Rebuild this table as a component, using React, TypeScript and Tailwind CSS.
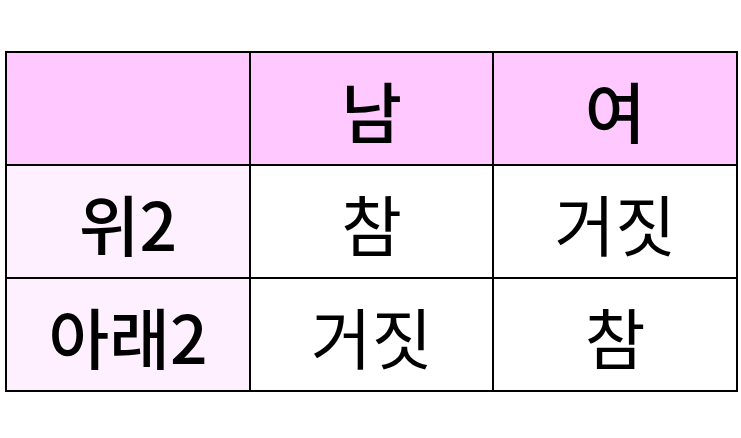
export default function App() {
  const rows = [
    { label: '위2', a: '참', b: '거짓' },
    { label: '아래2', a: '거짓', b: '참' },
  ];
  return (
    <div
      className="w-[741px] h-[438px] bg-white pt-[51px] pl-[5px]"
      style={{ fontFamily: '"Noto Sans CJK KR", "Noto Sans", sans-serif' }}
    >
      <table className="border-collapse border-2 border-black table-fixed w-[731px] text-black">
        <tbody>
          <tr className="h-[113px] bg-[#ffc8ff]">
            <td className="w-[244px] border-2 border-black"></td>
            <td className="w-[243px] border-2 border-black text-center text-[66px] font-medium leading-none">남</td>
            <td className="w-[244px] border-2 border-black text-center text-[66px] font-medium leading-none">여</td>
          </tr>
          {rows.map((r) => (
            <tr key={r.label} className="h-[113px]">
              <td className="border-2 border-black bg-[#fff0ff] text-center text-[66px] font-medium leading-none">{r.label}</td>
              <td className="border-2 border-black bg-white text-center text-[66px] leading-none">{r.a}</td>
              <td className="border-2 border-black bg-white text-center text-[66px] leading-none">{r.b}</td>
            </tr>
          ))}
        </tbody>
      </table>
    </div>
  );
}
